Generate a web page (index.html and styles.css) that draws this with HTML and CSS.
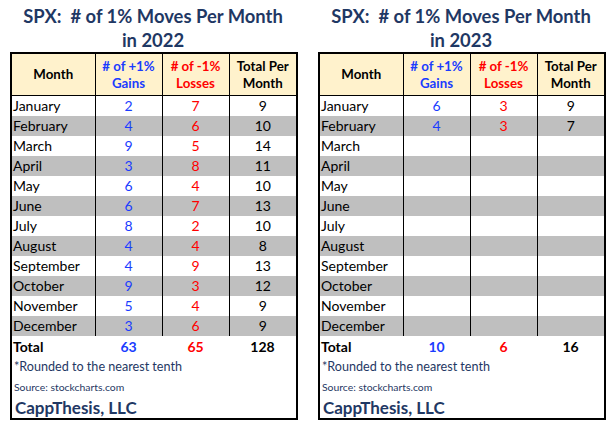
FILE: index.html
```html
<!DOCTYPE html>
<html>
<head>
<meta charset="utf-8">
<link rel="stylesheet" href="styles.css">
</head>
<body>
<div class="page">
  <section class="panel">
    <h1 class="title">SPX:&nbsp; # of 1% Moves Per Month<br>in 2022</h1>
    <table class="grid">
      <colgroup><col class="c-month"><col class="c-gain"><col class="c-loss"><col class="c-total"></colgroup>
      <thead>
        <tr><th>Month</th><th class="blue">#&nbsp;of +1%<br>Gains</th><th class="red">#&nbsp;of -1%<br>Losses</th><th>Total Per<br>Month</th></tr>
      </thead>
      <tbody>
        <tr><td class="m">January</td><td class="blue">2</td><td class="red">7</td><td>9</td></tr>
        <tr class="alt"><td class="m">February</td><td class="blue">4</td><td class="red">6</td><td>10</td></tr>
        <tr><td class="m">March</td><td class="blue">9</td><td class="red">5</td><td>14</td></tr>
        <tr class="alt"><td class="m">April</td><td class="blue">3</td><td class="red">8</td><td>11</td></tr>
        <tr><td class="m">May</td><td class="blue">6</td><td class="red">4</td><td>10</td></tr>
        <tr class="alt"><td class="m">June</td><td class="blue">6</td><td class="red">7</td><td>13</td></tr>
        <tr><td class="m">July</td><td class="blue">8</td><td class="red">2</td><td>10</td></tr>
        <tr class="alt"><td class="m">August</td><td class="blue">4</td><td class="red">4</td><td>8</td></tr>
        <tr><td class="m">September</td><td class="blue">4</td><td class="red">9</td><td>13</td></tr>
        <tr class="alt"><td class="m">October</td><td class="blue">9</td><td class="red">3</td><td>12</td></tr>
        <tr><td class="m">November</td><td class="blue">5</td><td class="red">4</td><td>9</td></tr>
        <tr class="alt"><td class="m">December</td><td class="blue">3</td><td class="red">6</td><td>9</td></tr>
      </tbody>
      <tfoot>
        <tr class="total"><td class="m">Total</td><td class="blue">63</td><td class="red">65</td><td>128</td></tr>
        <tr class="note"><td colspan="4">*Rounded to the nearest tenth</td></tr>
        <tr class="src"><td colspan="4">Source: stockcharts.com</td></tr>
        <tr class="brand"><td colspan="4">CappThesis, LLC</td></tr>
      </tfoot>
    </table>
  </section>
  <section class="panel">
    <h1 class="title">SPX:&nbsp; # of 1% Moves Per Month<br>in 2023</h1>
    <table class="grid">
      <colgroup><col class="c-month"><col class="c-gain"><col class="c-loss"><col class="c-total"></colgroup>
      <thead>
        <tr><th>Month</th><th class="blue">#&nbsp;of +1%<br>Gains</th><th class="red">#&nbsp;of -1%<br>Losses</th><th>Total Per<br>Month</th></tr>
      </thead>
      <tbody>
        <tr><td class="m">January</td><td class="blue">6</td><td class="red">3</td><td>9</td></tr>
        <tr class="alt"><td class="m">February</td><td class="blue">4</td><td class="red">3</td><td>7</td></tr>
        <tr><td class="m">March</td><td></td><td></td><td></td></tr>
        <tr class="alt"><td class="m">April</td><td></td><td></td><td></td></tr>
        <tr><td class="m">May</td><td></td><td></td><td></td></tr>
        <tr class="alt"><td class="m">June</td><td></td><td></td><td></td></tr>
        <tr><td class="m">July</td><td></td><td></td><td></td></tr>
        <tr class="alt"><td class="m">August</td><td></td><td></td><td></td></tr>
        <tr><td class="m">September</td><td></td><td></td><td></td></tr>
        <tr class="alt"><td class="m">October</td><td></td><td></td><td></td></tr>
        <tr><td class="m">November</td><td></td><td></td><td></td></tr>
        <tr class="alt"><td class="m">December</td><td></td><td></td><td></td></tr>
      </tbody>
      <tfoot>
        <tr class="total"><td class="m">Total</td><td class="blue">10</td><td class="red">6</td><td>16</td></tr>
        <tr class="note"><td colspan="4">*Rounded to the nearest tenth</td></tr>
        <tr class="src"><td colspan="4">Source: stockcharts.com</td></tr>
        <tr class="brand"><td colspan="4">CappThesis, LLC</td></tr>
      </tfoot>
    </table>
  </section>
</div>
</body>
</html>
```
FILE: styles.css
```css
html, body {
  margin: 0;
  padding: 0;
  background: #ffffff;
}
body {
  font-family: Lato, "Open Sans", sans-serif;
  color: #000;
}
.page {
  display: flex;
  gap: 22px;
  padding-left: 10px;
}
.panel {
  width: 286px;
  display: flex;
  flex-direction: column;
}
.title {
  margin: 0;
  padding-top: 4px;
  height: 48px;
  font-size: 18.4px;
  line-height: 24px;
  font-weight: 700;
  text-align: center;
  color: #1f3864;
  white-space: nowrap;
}
.grid {
  width: 286px;
  table-layout: fixed;
  border-collapse: collapse;
  border: 2px solid #000;
}
.c-month { width: 84px; }
.c-gain { width: 67px; }
.c-loss { width: 67px; }
.c-total { width: 68px; }
.grid th {
  background: #fff2cc;
  height: 41px;
  padding: 0;
  font-size: 13.3px;
  line-height: 17px;
  font-weight: 700;
  text-align: center;
  border-left: 1px solid #000;
  border-right: 1px solid #000;
  border-bottom: 1px solid #000;
}
.grid tbody td {
  height: 20px;
  padding: 0;
  font-size: 14px;
  line-height: 20px;
  text-align: center;
  border-left: 1px solid #000;
  border-right: 1px solid #000;
}
.grid tbody tr.alt td {
  background: #bfbfbf;
}
.grid td.m {
  text-align: left;
  padding-left: 1px;
}
.blue { color: #1a3cff; }
.red { color: #ff0000; }
.grid th.blue { color: #1a3cff; }
.grid th.red { color: #ff0000; }
.total td {
  height: 21px;
  padding: 0;
  font-size: 14px;
  line-height: 21px;
  font-weight: 700;
  text-align: center;
}
.note td {
  height: 20px;
  padding: 0 0 0 2px;
  font-size: 12.6px;
  line-height: 20px;
  color: #1f3864;
}
.src td {
  height: 21px;
  padding: 0 0 0 2px;
  font-size: 10.4px;
  line-height: 21px;
  color: #1f3864;
}
.brand td {
  height: 20px;
  padding: 0 0 0 3px;
  font-size: 17px;
  line-height: 20px;
  font-weight: 700;
  color: #1f3864;
}
```
